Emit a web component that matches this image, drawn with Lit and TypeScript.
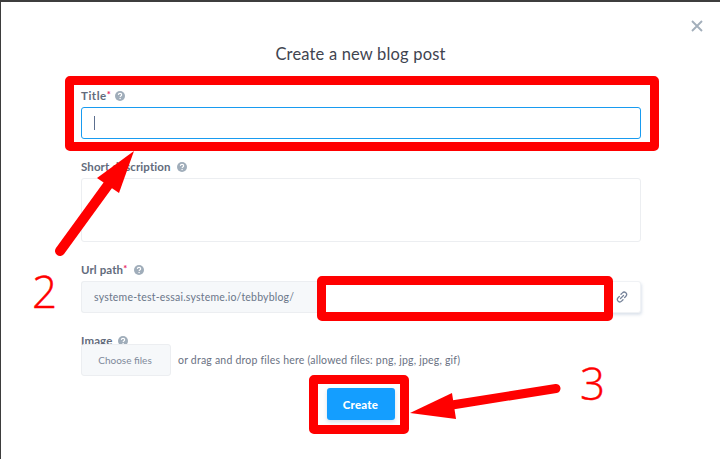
import { LitElement, html, css } from "lit";
import { customElement } from "lit/decorators.js";

const help = html`<svg class="help" viewBox="0 0 10 10" width="10" height="10" aria-hidden="true">
  <circle cx="5" cy="5" r="5" fill="#a0adba"></circle>
  <path d="M3.3 3.9C3.4 2.9 4.1 2.4 5 2.4c1 0 1.7.6 1.7 1.4 0 1.2-1.6 1.2-1.6 2.2" fill="none" stroke="#fff" stroke-width="1.1"></path>
  <circle cx="5.1" cy="7.5" r=".7" fill="#fff"></circle>
</svg>`;

@customElement("app-root")
export class AppRoot extends LitElement {
  static styles = css`
    :host {
      display: block;
      position: relative;
      width: 720px;
      height: 459px;
      overflow: hidden;
      background: #3d3d3d;
      font-family: "Lato", "Noto Sans", sans-serif;
      color: #5c687d;
    }
    .modal {
      box-sizing: border-box;
      height: 457px;
      margin: 2px 0 0 1px;
      padding: 41px 79px 0 80px;
      background: #fff;
      display: flex;
      flex-direction: column;
      position: relative;
    }
    h1 {
      margin: 0;
      height: 22px;
      line-height: 22px;
      font-size: 16.5px;
      font-weight: 400;
      letter-spacing: 0.18px;
      color: #3f4450;
      text-align: center;
      padding-right: 1px;
    }
    .close {
      position: absolute;
      top: 18px;
      right: 17px;
    }
    .label {
      height: 16px;
      display: flex;
      align-items: center;
      gap: 6px;
      font-size: 11.5px;
      line-height: 16px;
      font-weight: 700;
      letter-spacing: 0.2px;
      color: #626b7c;
    }
    .req {
      color: #e8265e;
      margin-left: -6px;
      margin-right: 1px;
      font-size: 9.5px;
      font-weight: 700;
      line-height: 14px;
      align-self: flex-start;
    }
    .title-label { margin-top: 23px; letter-spacing: 0.55px; gap: 5px; }
    .title-label .req { margin-left: -5px; margin-right: -1px; }
    .input {
      box-sizing: border-box;
      height: 32px;
      margin-top: 3px;
      border: 1px solid #189bf0;
      border-radius: 3px;
      display: flex;
      align-items: center;
      padding-left: 12px;
    }
    .caret { width: 1px; height: 14px; background: #5c6f8f; }
    .desc-label { margin-top: 20px; letter-spacing: 0.1px; gap: 6px; }
    .area {
      height: 64px;
      box-sizing: border-box;
      margin-top: 3px;
      border: 1px solid #eceef1;
      border-radius: 3px;
    }
    .url-label { margin-top: 20px; letter-spacing: 0.1px; }
    .url {
      height: 32px;
      margin-top: 3px;
      display: flex;
    }
    .addon {
      box-sizing: border-box;
      width: 250px;
      background: #f6f8fa;
      border: 1px solid #eceef1;
      border-right: 0;
      border-radius: 3px 0 0 3px;
      padding-left: 12px;
      font-size: 10.5px;
      line-height: 30px;
      letter-spacing: 0.2px;
      color: #6a7689;
      white-space: nowrap;
    }
    .middle { flex: 1; background: #fff; }
    .copy {
      box-sizing: border-box;
      width: 38px;
      display: flex;
      align-items: center;
      justify-content: center;
      background: #fff;
      border: 1px solid #f0f2f5;
      border-left: 0;
      border-radius: 0 3px 3px 0;
      box-shadow: 1px 2px 3px rgba(120, 145, 180, 0.25);
    }
    .img-label { margin-top: 20px; margin-bottom: -5px; letter-spacing: 0.1px; }
    .drop {
      height: 32px;
      display: flex;
      align-items: center;
      gap: 7px;
      font-size: 10.5px;
      letter-spacing: 0.21px;
      color: #6a7283;
      position: relative;
    }
    .choose {
      box-sizing: border-box;
      width: 90px;
      height: 32px;
      padding-right: 2px;
      display: flex;
      align-items: center;
      justify-content: center;
      background: #f6f8fa;
      border: 1px solid #eceef1;
      border-radius: 3px;
      color: #7f8a9a;
      font-size: 10px;
      letter-spacing: 0;
    }
    .actions { display: flex; justify-content: center; margin-top: 12px; padding-right: 1px; }
    .create {
      box-sizing: border-box;
      width: 68px;
      height: 32px;
      border: 0;
      border-radius: 3px;
      background: #149eff;
      color: #fff;
      font: 900 11.5px "Lato", sans-serif;
      letter-spacing: 0.2px;
      box-shadow: 0 2px 4px rgba(60, 100, 150, 0.2);
    }
    .redbox {
      position: absolute;
      box-sizing: border-box;
      border: 9px solid #ff0000;
      border-radius: 5px;
    }
    .b1 { left: 65px; top: 76px; width: 594px; height: 75px; }
    .b2 { left: 317px; top: 276px; width: 296px; height: 45px; background: #fff; }
    .b3 { left: 309px; top: 375px; width: 100px; height: 59px; }
    .arrows { position: absolute; left: 0; top: 0; }
    .num {
      position: absolute;
      font-family: "Open Sans", sans-serif;
      font-weight: 300;
      -webkit-text-stroke: 0.4px #ff0000;
      font-size: 44px;
      line-height: 44px;
      color: #ff0000;
    }
    .n2 { left: 32px; top: 269px; }
    .n3 { left: 580px; top: 361px; }
  `;

  render() {
    return html`
      <div class="modal">
        <h1>Create a new blog post</h1>
        <svg class="close" width="12" height="12" viewBox="0 0 12 12" aria-hidden="true">
          <path d="M1 1l10 10M11 1L1 11" stroke="#a3afbb" stroke-width="1.9" fill="none"></path>
        </svg>

        <div class="label title-label">Title<span class="req">*</span>${help}</div>
        <div class="input"><span class="caret"></span></div>

        <div class="label desc-label">Short description ${help}</div>
        <div class="area"></div>

        <div class="label url-label">Url path<span class="req">*</span>${help}</div>
        <div class="url">
          <div class="addon">systeme-test-essai.systeme.io/tebbyblog/</div>
          <div class="middle"></div>
          <div class="copy">
            <svg width="12" height="12" viewBox="0 0 12 12" fill="none" stroke="#76839a" stroke-width="1.3" stroke-linecap="round" aria-hidden="true">
              <path d="M5 3.3l1.4-1.4a2.3 2.3 0 0 1 3.5 3.3L8.6 6.6"></path>
              <path d="M7 8.7l-1.4 1.4a2.3 2.3 0 0 1-3.5-3.3l1.3-1.4"></path>
              <path d="M4.5 7.5l3-3"></path>
            </svg>
          </div>
        </div>

        <div class="label img-label">Image ${help}</div>
        <div class="drop">
          <div class="choose">Choose files</div>
          <span>or drag and drop files here (allowed files: png, jpg, jpeg, gif)</span>
        </div>

        <div class="actions"><button class="create">Create</button></div>
      </div>

      <div class="redbox b1"></div>
      <div class="redbox b2"></div>
      <div class="redbox b3"></div>

      <svg class="arrows" width="720" height="459" aria-hidden="true">
        <path d="M60 251L108 185" stroke="#ff0000" stroke-width="10" stroke-linecap="round" fill="none"></path>
        <polygon points="134,151 97,178 119,193" fill="#ff0000"></polygon>
        <path d="M556 388.500L452 405" stroke="#ff0000" stroke-width="9" stroke-linecap="round" fill="none"></path>
        <polygon points="410,413 452,393 456,419" fill="#ff0000"></polygon>
      </svg>

      <div class="num n2">2</div>
      <div class="num n3">3</div>
    `;
  }
}
